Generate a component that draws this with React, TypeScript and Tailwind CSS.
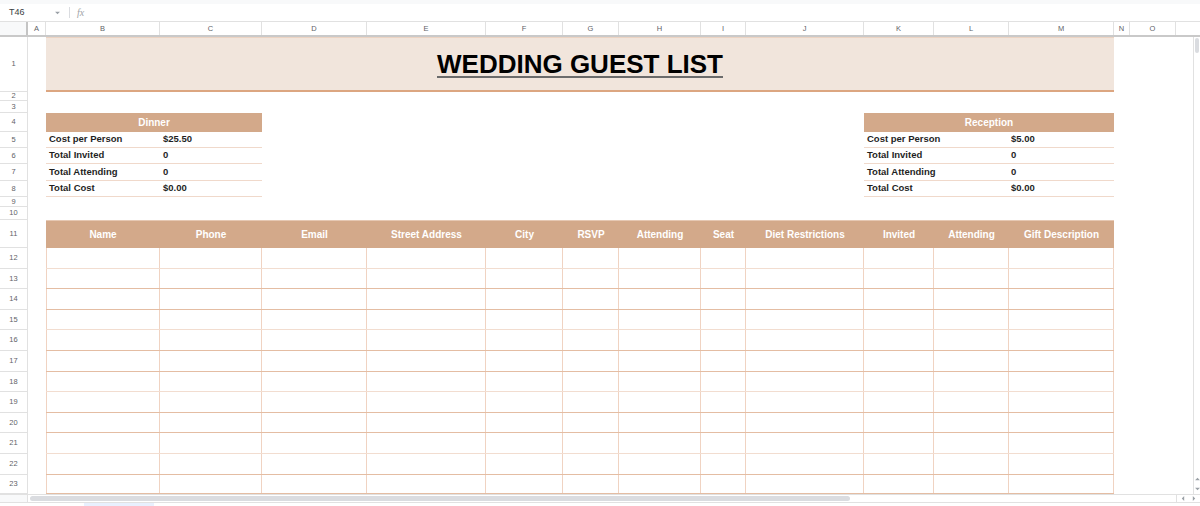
import React from 'react';

type Col = { key: string; w: string };

const COLS: Col[] = [
  { key: 'A', w: 'w-[18px]' },
  { key: 'B', w: 'w-[114px]' },
  { key: 'C', w: 'w-[102px]' },
  { key: 'D', w: 'w-[105px]' },
  { key: 'E', w: 'w-[119px]' },
  { key: 'F', w: 'w-[77px]' },
  { key: 'G', w: 'w-[56px]' },
  { key: 'H', w: 'w-[82px]' },
  { key: 'I', w: 'w-[45px]' },
  { key: 'J', w: 'w-[118px]' },
  { key: 'K', w: 'w-[70px]' },
  { key: 'L', w: 'w-[75px]' },
  { key: 'M', w: 'w-[105px]' },
  { key: 'N', w: 'w-[16px]' },
  { key: 'O', w: 'w-[46px]' },
];

const TABLE_COLS = COLS.slice(1, 13);

const HEADERS = [
  'Name',
  'Phone',
  'Email',
  'Street Address',
  'City',
  'RSVP',
  'Attending',
  'Seat',
  'Diet Restrictions',
  'Invited',
  'Attending',
  'Gift Description',
];

const DINNER = [
  ['Cost per Person', '$25.50'],
  ['Total Invited', '0'],
  ['Total Attending', '0'],
  ['Total Cost', '$0.00'],
];

const RECEPTION = [
  ['Cost per Person', '$5.00'],
  ['Total Invited', '0'],
  ['Total Attending', '0'],
  ['Total Cost', '$0.00'],
];

const SUMMARY_HEIGHTS = ['h-[16px]', 'h-[16px]', 'h-[17px]', 'h-[16px]'];

// guest rows 12..23, bottom rule alternates between two tones
const GUEST_ROWS = [
  { n: 12, h: 'h-[21px]', line: 'border-b-[#f2ddd0]' },
  { n: 13, h: 'h-[20px]', line: 'border-b-[#e4bda3]' },
  { n: 14, h: 'h-[21px]', line: 'border-b-[#e4bda3]' },
  { n: 15, h: 'h-[20px]', line: 'border-b-[#f2ddd0]' },
  { n: 16, h: 'h-[21px]', line: 'border-b-[#e4bda3]' },
  { n: 17, h: 'h-[21px]', line: 'border-b-[#e4bda3]' },
  { n: 18, h: 'h-[20px]', line: 'border-b-[#f2ddd0]' },
  { n: 19, h: 'h-[21px]', line: 'border-b-[#e4bda3]' },
  { n: 20, h: 'h-[20px]', line: 'border-b-[#e4bda3]' },
  { n: 21, h: 'h-[21px]', line: 'border-b-[#f2ddd0]' },
  { n: 22, h: 'h-[21px]', line: 'border-b-[#e4bda3]' },
  { n: 23, h: 'h-[19px]', line: 'border-b-[#e4bda3]' },
];

const SheetRow: React.FC<{ n: number; h: string; children?: React.ReactNode }> = ({ n, h, children }) => (
  <div className={`flex shrink-0 ${h}`}>
    <div className="w-[28px] shrink-0 flex items-center justify-center border-r border-b border-[#e1e1e1] text-[7.5px] font-normal text-[#5f6368]">
      {n}
    </div>
    <div className="w-[18px] shrink-0" />
    {children}
    <div className="flex-1" />
  </div>
);

const Tri: React.FC<{ dir: 'up' | 'down' | 'left' | 'right' }> = ({ dir }) => {
  const pts = {
    up: '0,4 3,1 6,4',
    down: '0,1 3,4 6,1',
    left: '4,0 1,3 4,6',
    right: '1,0 4,3 1,6',
  }[dir];
  const box = dir === 'up' || dir === 'down' ? '0 0 6 5' : '0 0 5 6';
  return (
    <svg viewBox={box} className={dir === 'up' || dir === 'down' ? 'w-[5px] h-[4px]' : 'w-[4px] h-[5px]'}>
      <polygon points={pts} fill="#9aa0a6" />
    </svg>
  );
};

const App: React.FC = () => {
  return (
    <div className="w-[1200px] h-[506px] overflow-hidden flex flex-col bg-white font-['Liberation_Sans',Arial,sans-serif] text-[#1f1f1f]">
      {/* top strip */}
      <div className="h-[4px] shrink-0 bg-[#f8f9fa]" />

      {/* formula bar */}
      <div className="h-[17px] shrink-0 flex items-center">
        <span className="ml-[9px] w-[46px] text-[9px] text-[#3c4043]">T46</span>
        <Tri dir="down" />
        <div className="ml-[9px] h-[11px] w-px bg-[#dadce0]" />
        <span className="ml-[7px] font-['Liberation_Serif',serif] italic text-[10px] text-[#a0a4a8]">fx</span>
      </div>

      {/* column headers */}
      <div className="h-[16px] shrink-0 flex border-t border-[#e1e1e1] border-b-2 border-b-[#c9c9c9] text-[7.5px] text-[#5f6368]">
        <div className="w-[28px] shrink-0 border-r-2 border-[#c4c4c4] bg-[#f8f9fa]" />
        {COLS.map((c) => (
          <div key={c.key} className={`${c.w} shrink-0 flex items-center justify-center border-r border-[#e1e1e1]`}>
            {c.key}
          </div>
        ))}
        <div className="flex-1" />
      </div>

      {/* sheet body */}
      <div className="h-[457px] shrink-0 flex overflow-hidden">
        <div className="w-[1193px] shrink-0 flex flex-col text-[9.5px] font-bold">
          <SheetRow n={1} h="h-[55px]">
            <div className="w-[1068px] shrink-0 flex items-center justify-center bg-[#f1e5dc] border-t border-t-[#ecd3c2] border-b-2 border-b-[#dca681]">
              <span className="text-[26px] leading-none font-bold text-black underline decoration-[#6b6b6b] decoration-[1.5px] underline-offset-[3px]">
                WEDDING GUEST LIST
              </span>
            </div>
          </SheetRow>
          <SheetRow n={2} h="h-[9px]" />
          <SheetRow n={3} h="h-[12px]" />
          <SheetRow n={4} h="h-[19px]">
            <div className="w-[216px] shrink-0 flex items-center justify-center bg-[#d3a98a] text-white text-[10px]">
              Dinner
            </div>
            <div className="w-[602px] shrink-0" />
            <div className="w-[250px] shrink-0 flex items-center justify-center bg-[#d3a98a] text-white text-[10px]">
              Reception
            </div>
          </SheetRow>
          {DINNER.map(([label, value], i) => (
            <SheetRow key={label} n={5 + i} h={SUMMARY_HEIGHTS[i]}>
              <div className="w-[216px] shrink-0 flex items-center border-b border-[#f0d9cb]">
                <div className="w-[114px] shrink-0 pl-[3px] whitespace-nowrap">{label}</div>
                <div className="pl-[3px]">{value}</div>
              </div>
              <div className="w-[602px] shrink-0" />
              <div className="w-[250px] shrink-0 flex items-center border-b border-[#f0d9cb]">
                <div className="w-[145px] shrink-0 pl-[3px] whitespace-nowrap">{RECEPTION[i][0]}</div>
                <div className="pl-[2px]">{RECEPTION[i][1]}</div>
              </div>
            </SheetRow>
          ))}
          <SheetRow n={9} h="h-[10px]" />
          <SheetRow n={10} h="h-[13px]" />
          <SheetRow n={11} h="h-[28px]">
            <div className="w-[1068px] shrink-0 flex bg-[#d3a98a] border-t border-[#e6c8b3] text-white text-[10px]">
              {TABLE_COLS.map((c, i) => (
                <div key={c.key} className={`${c.w} shrink-0 flex items-center justify-center whitespace-nowrap`}>
                  {HEADERS[i]}
                </div>
              ))}
            </div>
          </SheetRow>
          {GUEST_ROWS.map((r) => (
            <SheetRow key={r.n} n={r.n} h={r.h}>
              <div className={`w-[1068px] shrink-0 flex border-b ${r.line}`}>
                {TABLE_COLS.map((c, i) => (
                  <div
                    key={c.key}
                    className={`${c.w} shrink-0 border-r border-[#f0d3c2] ${i === 0 ? 'border-l' : ''}`}
                  />
                ))}
              </div>
            </SheetRow>
          ))}
        </div>

        {/* vertical scrollbar */}
        <div className="w-[7px] shrink-0 flex flex-col items-center border-l border-[#e1e1e1]">
          <div className="mt-[1px] h-[15px] w-[4px] rounded-full bg-[#dadce0]" />
          <div className="flex-1" />
          <div className="mb-[3px] flex flex-col items-center gap-[6px]">
            <Tri dir="up" />
            <Tri dir="down" />
          </div>
        </div>
      </div>

      {/* horizontal scrollbar */}
      <div className="h-[8px] shrink-0 flex items-center border-t border-[#e1e1e1]">
        <div className="w-[28px] h-full shrink-0 border-r border-[#e1e1e1] bg-[#f8f9fa]" />
        <div className="ml-[2px] w-[820px] h-[5px] rounded-full bg-[#dadce0]" />
        <div className="flex-1" />
        <div className="w-[24px] h-full flex items-center justify-around border-l border-[#e1e1e1]">
          <Tri dir="left" />
          <Tri dir="right" />
        </div>
      </div>

      {/* sheet tab strip */}
      <div className="h-[4px] shrink-0 flex border-t border-[#e1e1e1]">
        <div className="ml-[84px] w-[70px] h-full bg-[#e8f0fe]" />
      </div>
    </div>
  );
};

export default App;
